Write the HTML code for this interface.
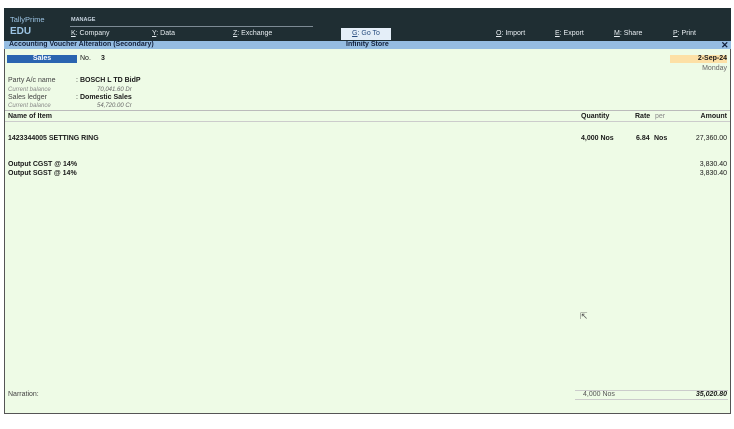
<!DOCTYPE html>
<html><head><meta charset="utf-8"><style>
*{margin:0;padding:0;box-sizing:border-box}
body{width:734px;height:429px;background:#fff;font-family:"Liberation Sans",sans-serif;font-size:7px;color:#1a1a1a;position:relative;overflow:hidden}
.a{position:absolute;white-space:nowrap;line-height:8px}
.b{font-weight:bold}
.m{color:#e8eef2}
.m u{text-decoration:underline}
.r{text-align:right}
.i{font-style:italic;color:#888;font-size:6px}
</style></head><body>
<div class="a" style="left:4px;top:8px;width:727px;height:33px;background:#1f2e33"></div>
<div class="a" style="left:10px;top:16px;color:#9cc4e4;font-size:7.5px">TallyPrime</div>
<div class="a" style="left:10px;top:27px;color:#9cc4e4;font-size:10px;font-weight:bold;line-height:10px">EDU</div>
<div class="a b" style="left:71px;top:16px;color:#c8d4e0;font-size:5.5px">MANAGE</div>
<div class="a" style="left:70px;top:26px;width:243px;height:1px;background:#7c8a94"></div>
<div class="a m" style="left:71px;top:30px"><u>K</u>: Company</div>
<div class="a m" style="left:152px;top:30px"><u>Y</u>: Data</div>
<div class="a m" style="left:233px;top:30px"><u>Z</u>: Exchange</div>
<div class="a" style="left:341px;top:28px;width:50px;height:12px;background:#e4eef8;color:#2b4f80;text-align:center;line-height:12px"><u>G</u>: Go To</div>
<div class="a m" style="left:496px;top:30px"><u>O</u>: Import</div>
<div class="a m" style="left:555px;top:30px"><u>E</u>: Export</div>
<div class="a m" style="left:614px;top:30px"><u>M</u>: Share</div>
<div class="a m" style="left:673px;top:30px"><u>P</u>: Print</div>
<div class="a" style="left:4px;top:41px;width:727px;height:8px;background:#95bde2"></div>
<div class="a b" style="left:9px;top:41px;color:#12203a">Accounting Voucher Alteration (Secondary)</div>
<div class="a b" style="left:346px;top:41px;color:#12203a">Infinity Store</div>
<div class="a b" style="left:721px;top:41px;color:#12203a;font-size:9px;line-height:9px">✕</div>
<div class="a" style="left:4px;top:49px;width:727px;height:365px;background:#eefbe6;border:1px solid #555;border-top:none"></div>
<div class="a b" style="left:7px;top:55px;width:70px;height:8px;background:#2a64b0;color:#fff;text-align:center">Sales</div>
<div class="a" style="left:80px;top:55px">No.</div>
<div class="a b" style="left:101px;top:55px">3</div>
<div class="a b r" style="left:670px;top:55px;width:57px;height:8px;background:#fde0a6">2-Sep-24</div>
<div class="a r" style="left:670px;top:65px;width:57px;color:#666">Monday</div>
<div class="a" style="left:8px;top:77px;color:#444">Party A/c name</div>
<div class="a" style="left:76px;top:77px">:</div>
<div class="a b" style="left:80px;top:77px">BOSCH L TD BidP</div>
<div class="a i" style="left:8px;top:86px">Current balance</div>
<div class="a i" style="left:97px;top:86px;color:#666">70,041.60 Dr</div>
<div class="a" style="left:8px;top:94px;color:#444">Sales ledger</div>
<div class="a" style="left:76px;top:94px">:</div>
<div class="a b" style="left:80px;top:94px">Domestic Sales</div>
<div class="a i" style="left:8px;top:102px">Current balance</div>
<div class="a i" style="left:97px;top:102px;color:#666">54,720.00 Cr</div>
<div class="a" style="left:5px;top:110px;width:725px;height:1px;background:#bbb"></div>
<div class="a b" style="left:8px;top:113px">Name of Item</div>
<div class="a b" style="left:581px;top:113px">Quantity</div>
<div class="a b" style="left:635px;top:113px">Rate</div>
<div class="a" style="left:655px;top:113px;color:#888">per</div>
<div class="a b r" style="left:680px;top:113px;width:47px">Amount</div>
<div class="a" style="left:5px;top:121px;width:725px;height:1px;background:#ccc"></div>
<div class="a b" style="left:8px;top:135px">1423344005 SETTING RING</div>
<div class="a b" style="left:581px;top:135px">4,000 Nos</div>
<div class="a b" style="left:636px;top:135px">6.84</div>
<div class="a b" style="left:654px;top:135px">Nos</div>
<div class="a r" style="left:680px;top:135px;width:47px">27,360.00</div>
<div class="a b" style="left:8px;top:161px">Output CGST @ 14%</div>
<div class="a r" style="left:680px;top:161px;width:47px">3,830.40</div>
<div class="a b" style="left:8px;top:170px">Output SGST @ 14%</div>
<div class="a r" style="left:680px;top:170px;width:47px">3,830.40</div>
<div class="a" style="left:580px;top:312px;font-size:9px;color:#555">⇱</div>
<div class="a" style="left:575px;top:390px;width:153px;height:1px;background:#ccc"></div>
<div class="a" style="left:575px;top:399px;width:153px;height:1px;background:#ccc"></div>
<div class="a" style="left:8px;top:391px;color:#444">Narration:</div>
<div class="a" style="left:583px;top:391px;color:#555">4,000 Nos</div>
<div class="a b r" style="left:670px;top:391px;width:57px;font-style:italic">35,020.80</div>
</body></html>
